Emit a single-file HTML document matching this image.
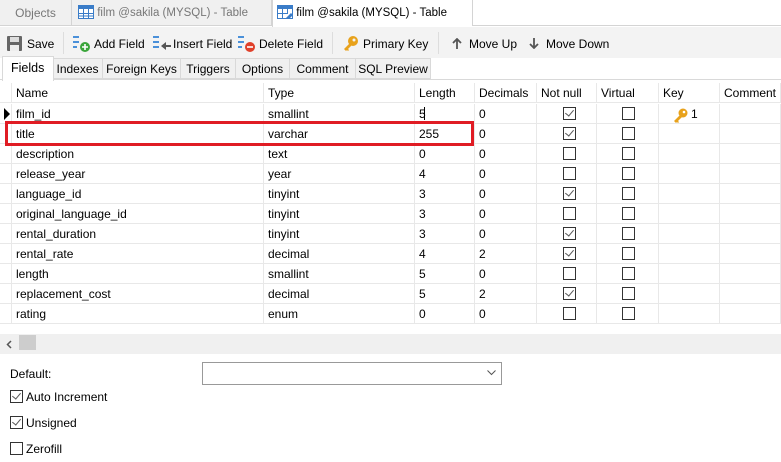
<!DOCTYPE html>
<html><head><meta charset="utf-8"><style>
*{box-sizing:border-box;margin:0;padding:0}
body{width:781px;height:462px;overflow:hidden;background:#fff;font-family:"Liberation Sans",sans-serif;font-size:12px;color:#000;position:relative}
.a{position:absolute}
.t{position:absolute;top:0;height:26px;line-height:26px;font-size:11.5px;white-space:nowrap}
.cb{position:absolute;width:13px;height:13px;border:1px solid #333;background:#fff}
.ck::after{content:"";position:absolute;left:3px;top:0px;width:4px;height:7px;border:solid #555;border-width:0 1.5px 1.5px 0;transform:rotate(40deg)}
.row{position:absolute;left:0;width:781px;height:20px;border-bottom:1px solid #e8e8e8}
.cell{position:absolute;top:0;height:20px;line-height:20px;padding-left:4px;border-right:1px solid #e8e8e8;white-space:nowrap}
.tb{position:absolute;top:34px;height:20px;line-height:20px;font-size:12px;white-space:nowrap}
.st{position:absolute;top:58px;height:21px;line-height:21px;font-size:12px;background:#f0f0f0;border:1px solid #d9d9d9;border-left:none;text-align:center}
</style></head><body>
<div class="a" style="left:0;top:0;width:781px;height:26px;background:#f0f0f0;border-bottom:1px solid #d4d4d4"></div>
<div class="t" style="left:0;width:72px;color:#777;text-align:center;border-right:1px solid #d4d4d4;font-size:12px">Objects</div>
<div class="t" style="left:72px;width:200px;color:#777;border-right:1px solid #d4d4d4;padding-left:6px">
<svg style="vertical-align:-3px" width="16" height="14"><rect x="0.5" y="0.5" width="15" height="13" fill="#fff" stroke="#3a7cc8"/><rect x="0" y="0" width="16" height="4" fill="#3a7cc8"/><path d="M0 8.5H16M0 11H16M5.5 4V14M10.5 4V14" stroke="#3a7cc8"/></svg> film @sakila (MYSQL) - Table</div>
<div class="a" style="left:272px;top:0;width:509px;height:27px;background:#fff;border-left:1px solid #d4d4d4"></div>
<div class="a" style="left:472px;top:0;width:309px;height:26px;border-left:1px solid #d4d4d4;border-bottom:1px solid #d4d4d4"></div>
<div class="t" style="left:277px;color:#000">
<svg style="vertical-align:-3px" width="16" height="14"><rect x="0.5" y="0.5" width="15" height="13" fill="#fff" stroke="#3a7cc8"/><rect x="0" y="0" width="16" height="4" fill="#3a7cc8"/><path d="M0 8.5H10M5.5 4V14M10.5 4V9" stroke="#3a7cc8"/><path d="M9 13l5-5 2 2-5 5z" fill="#3a7cc8"/></svg> film @sakila (MYSQL) - Table</div>
<div class="a" style="left:0;top:27px;width:781px;height:31px;background:#f3f3f3"></div>
<svg class="a" style="left:7px;top:36px" width="16" height="16"><rect x="0" y="0" width="15" height="15" rx="1" fill="#666"/><rect x="3" y="1" width="9" height="5" fill="#ddd"/><rect x="3" y="9" width="9" height="6" fill="#eee"/></svg>
<div class="tb" style="left:27px">Save</div>
<div class="a" style="left:63px;top:32px;width:1px;height:22px;background:#ddd"></div>
<svg class="a" style="left:73px;top:35px" width="18" height="18"><path d="M0 2h6M0 7h6M0 12h4" stroke="#4a90d9" stroke-width="2"/><circle cx="12" cy="12" r="5" fill="#3aa53a"/><path d="M9 12h6M12 9v6" stroke="#fff" stroke-width="1.6"/></svg>
<div class="tb" style="left:94px">Add Field</div>
<svg class="a" style="left:153px;top:35px" width="18" height="18"><path d="M0 2h6M0 7h6M0 12h6" stroke="#4a90d9" stroke-width="2"/><path d="M8 11l5-4v3h5v2h-5v3z" fill="#555"/></svg>
<div class="tb" style="left:173px">Insert Field</div>
<svg class="a" style="left:238px;top:35px" width="18" height="18"><path d="M0 2h6M0 7h6M0 12h4" stroke="#4a90d9" stroke-width="2"/><circle cx="12" cy="12" r="5" fill="#e0402a"/><path d="M9 12h6" stroke="#fff" stroke-width="1.6"/></svg>
<div class="tb" style="left:259px">Delete Field</div>
<div class="a" style="left:332px;top:32px;width:1px;height:22px;background:#ddd"></div>
<svg class="a" style="left:343px;top:35px" width="16" height="17"><circle cx="10" cy="6" r="5" fill="#e8a21c"/><circle cx="11" cy="5" r="1.5" fill="#f3f3f3"/><path d="M7 8L1 14l2 2 1-1 1 1 1-1-1-1 4-4z" fill="#e8a21c"/></svg>
<div class="tb" style="left:363px">Primary Key</div>
<div class="a" style="left:438px;top:32px;width:1px;height:22px;background:#ddd"></div>
<svg class="a" style="left:452px;top:38px" width="10" height="11"><path d="M5 11V1M1 5l4-4 4 4" stroke="#555" stroke-width="1.8" fill="none"/></svg>
<div class="tb" style="left:469px">Move Up</div>
<svg class="a" style="left:529px;top:38px" width="10" height="11"><path d="M5 0v10M1 6l4 4 4-4" stroke="#555" stroke-width="1.8" fill="none"/></svg>
<div class="tb" style="left:546px">Move Down</div>
<div class="a" style="left:0;top:58px;width:781px;height:22px;background:#fff;border-bottom:1px solid #d9d9d9"></div>
<div class="st" style="left:53px;width:50px">Indexes</div>
<div class="st" style="left:103px;width:78px">Foreign Keys</div>
<div class="st" style="left:181px;width:55px">Triggers</div>
<div class="st" style="left:236px;width:54px">Options</div>
<div class="st" style="left:290px;width:66px">Comment</div>
<div class="st" style="left:356px;width:75px">SQL Preview</div>
<div class="a" style="left:2px;top:56px;width:52px;height:25px;background:#fff;border:1px solid #d9d9d9;border-bottom:none;line-height:22px;font-size:12.5px;padding-left:8px">Fields</div>
<div id="g"></div>
<div class="a" style="left:0;top:334px;width:781px;height:20px;background:#f0f0f0"></div>
<svg class="a" style="left:6px;top:340px" width="6" height="9"><path d="M5 1L1.5 4.5 5 8" stroke="#555" stroke-width="1.5" fill="none"/></svg>
<div class="a" style="left:19px;top:335px;width:17px;height:15px;background:#cdcdcd"></div>
<div class="a" style="left:10px;top:367px;font-size:12px">Default:</div>
<div class="a" style="left:202px;top:362px;width:300px;height:23px;border:1px solid #999;background:#fff"></div>
<svg class="a" style="left:487px;top:370px" width="9" height="6"><path d="M0.5 0.5l4 4 4-4" stroke="#555" fill="none"/></svg>
<div class="cb ck" style="left:10px;top:390px"></div><div class="a" style="left:26px;top:390px;font-size:12px">Auto Increment</div>
<div class="cb ck" style="left:10px;top:416px"></div><div class="a" style="left:26px;top:416px;font-size:12px">Unsigned</div>
<div class="cb" style="left:10px;top:442px"></div><div class="a" style="left:26px;top:442px;font-size:12px">Zerofill</div>
<script>
var cols=[0,12,264,415,475,537,597,659,720,781];
var hd=["","Name","Type","Length","Decimals","Not null","Virtual","Key","Comment"];
var rows=[["film_id","smallint","5","0",1],["title","varchar","255","0",1],["description","text","0","0",0],["release_year","year","4","0",0],["language_id","tinyint","3","0",1],["original_language_id","tinyint","3","0",0],["rental_duration","tinyint","3","0",1],["rental_rate","decimal","4","2",1],["length","smallint","5","0",0],["replacement_cost","decimal","5","2",1],["rating","enum","0","0",0]];
var h="";
function row(y,vals,bg){h+='<div class="row" style="top:'+y+'px;background:'+(bg||'#fff')+'">';for(var i=0;i<9;i++){h+='<div class="cell" style="left:'+cols[i]+'px;width:'+(cols[i+1]-cols[i])+'px">'+(vals[i]||'')+'</div>';}h+='</div>';}
row(83,hd);
for(var r=0;r<rows.length;r++){var d=rows[r];var y=104+r*20;
row(y,["",d[0],d[1],d[2],d[3],'<span class="cb'+(d[4]?' ck':'')+'" style="left:26px;top:3px"></span>','<span class="cb" style="left:25px;top:3px"></span>',r==0?'<svg style="position:absolute;left:14px;top:3px" width="16" height="16"><circle cx="10" cy="6" r="4.5" fill="#e8a21c"/><circle cx="11" cy="5" r="1.3" fill="#fff"/><path d="M7 8L1 14l2 2 1-1 1 1 1-1-1-1 4-4z" fill="#e8a21c"/></svg><span style="position:absolute;left:32px">1</span>':'',""]);}
h+='<div class="a" style="left:4px;top:108px;width:0;height:0;border-top:6px solid transparent;border-bottom:6px solid transparent;border-left:6px solid #000"></div>';
h+='<div class="a" style="left:424px;top:107px;width:1px;height:13px;background:#000"></div>';
h+='<div class="a" style="left:5px;top:121px;width:469px;height:25px;border:3px solid #e01c24"></div>';
document.getElementById("g").innerHTML=h;
</script>
</body></html>
